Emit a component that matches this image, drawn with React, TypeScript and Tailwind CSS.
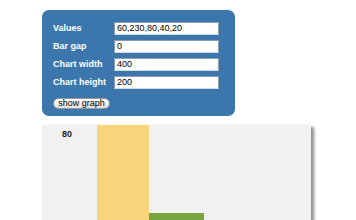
import * as React from 'react';

const fields = [
  { label: 'Values', value: '60,230,80,40,20' },
  { label: 'Bar gap', value: '0' },
  { label: 'Chart width', value: '400' },
  { label: 'Chart height', value: '200' },
];

export default function App() {
  return (
    <div className="w-[356px] h-[220px] overflow-hidden bg-white pl-[42px] pt-[10px] font-['Liberation_Sans',Arial,sans-serif]">
      <div className="w-[193px] h-[106px] rounded-[7px] bg-[#3b77ad] pl-[11px] pt-[12px]">
        <div className="flex flex-col gap-[5px]">
          {fields.map((f) => (
            <div key={f.label} className="flex items-center">
              <span className="w-[61px] text-[9px] font-bold leading-none text-white">{f.label}</span>
              <div className="w-[105px] h-[13px] bg-white border border-[#8d9db0] border-b-[#d0d8e0] pl-[2px] text-[9px] leading-[11px] text-black">
                {f.value}
              </div>
            </div>
          ))}
        </div>
        <button className="mt-[5px] h-[11px] w-[57px] rounded-full bg-gradient-to-b from-white to-[#e2e2e2] border border-[#9a9a9a] text-[9px] leading-[9px] text-black">
          show graph
        </button>
      </div>
      <div className="mt-[9px] w-[269px] h-[200px] bg-[#f1f1f1] shadow-[3px_2px_3px_rgba(0,0,0,0.45)] flex">
        <div className="w-[55px] pl-[20px] pt-[5px] text-[9px] font-bold leading-none text-[#222]">80</div>
        <div className="flex items-end">
          <div className="w-[52px] h-[200px] bg-[#f8d57b]" />
          <div className="w-[55px] h-[112px] bg-[#77a43f]" />
        </div>
      </div>
    </div>
  );
}
